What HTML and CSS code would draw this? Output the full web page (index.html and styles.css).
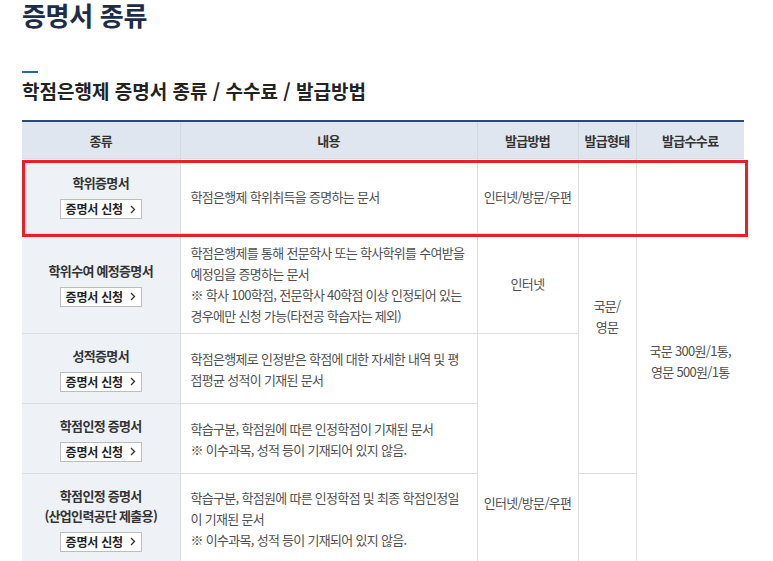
FILE: index.html
```html
<!DOCTYPE html>
<html lang="ko">
<head>
<meta charset="utf-8">
<title>증명서 종류</title>
<link rel="stylesheet" href="styles.css">
</head>
<body>
<div class="page">
  <h1 class="title">증명서 종류</h1>
  <div class="dash"></div>
  <h2 class="subtitle">학점은행제 증명서 종류 / 수수료 / 발급방법</h2>
  <div class="table-wrap">
    <table class="cert">
      <colgroup>
        <col class="c-kind"><col class="c-desc"><col class="c-method"><col class="c-form"><col class="c-fee">
      </colgroup>
      <thead>
        <tr><th>종류</th><th>내용</th><th>발급방법</th><th>발급형태</th><th>발급수수료</th></tr>
      </thead>
      <tbody>
        <tr class="r1">
          <td class="kind"><div class="kind-in"><span class="label">학위증명서</span><a class="btn">증명서 신청 <svg class="chev" viewBox="0 0 6 9" width="6" height="9"><path d="M1 1l3.5 3.5L1 8" fill="none" stroke="#333" stroke-width="1.3"/></svg></a></div></td>
          <td class="desc">학점은행제 학위취득을 증명하는 문서</td>
          <td class="center">인터넷/방문/우편</td>
          <td class="center form" rowspan="4">국문/<br>영문</td>
          <td class="center fee" rowspan="5">국문 300원/1통,<br>영문 500원/1통</td>
        </tr>
        <tr class="r2">
          <td class="kind"><div class="kind-in"><span class="label">학위수여 예정증명서</span><a class="btn">증명서 신청 <svg class="chev" viewBox="0 0 6 9" width="6" height="9"><path d="M1 1l3.5 3.5L1 8" fill="none" stroke="#333" stroke-width="1.3"/></svg></a></div></td>
          <td class="desc">학점은행제를 통해 전문학사 또는 학사학위를 수여받을<br>예정임을 증명하는 문서<br>※ 학사 100학점, 전문학사 40학점 이상 인정되어 있는<br>경우에만 신청 가능(타전공 학습자는 제외)</td>
          <td class="center">인터넷</td>
        </tr>
        <tr class="r3">
          <td class="kind"><div class="kind-in"><span class="label">성적증명서</span><a class="btn">증명서 신청 <svg class="chev" viewBox="0 0 6 9" width="6" height="9"><path d="M1 1l3.5 3.5L1 8" fill="none" stroke="#333" stroke-width="1.3"/></svg></a></div></td>
          <td class="desc">학점은행제로 인정받은 학점에 대한 자세한 내역 및 평<br>점평균 성적이 기재된 문서</td>
          <td class="center" rowspan="4">인터넷/방문/우편</td>
        </tr>
        <tr class="r4">
          <td class="kind"><div class="kind-in"><span class="label">학점인정 증명서</span><a class="btn">증명서 신청 <svg class="chev" viewBox="0 0 6 9" width="6" height="9"><path d="M1 1l3.5 3.5L1 8" fill="none" stroke="#333" stroke-width="1.3"/></svg></a></div></td>
          <td class="desc">학습구분, 학점원에 따른 인정학점이 기재된 문서<br>※ 이수과목, 성적 등이 기재되어 있지 않음.</td>
        </tr>
        <tr class="r5">
          <td class="kind"><div class="kind-in"><span class="label">학점인정 증명서<br>(산업인력공단 제출용)</span><a class="btn">증명서 신청 <svg class="chev" viewBox="0 0 6 9" width="6" height="9"><path d="M1 1l3.5 3.5L1 8" fill="none" stroke="#333" stroke-width="1.3"/></svg></a></div></td>
          <td class="desc">학습구분, 학점원에 따른 인정학점 및 최종 학점인정일<br>이 기재된 문서<br>※ 이수과목, 성적 등이 기재되어 있지 않음.</td>
          <td class="center" rowspan="2"></td>
        </tr>
        <tr class="r6">
          <td class="kind"><div class="kind-in"><span class="label">학점인정 증명서<br>(영문)</span><a class="btn">증명서 신청 <svg class="chev" viewBox="0 0 6 9" width="6" height="9"><path d="M1 1l3.5 3.5L1 8" fill="none" stroke="#333" stroke-width="1.3"/></svg></a></div></td>
          <td class="desc">학습구분, 학점원에 따른 인정학점이 기재된 영문 문서</td>
          <td class="center"></td>
        </tr>
      </tbody>
    </table>
    <div class="highlight"></div>
  </div>
</div>
</body>
</html>
```

FILE: styles.css
```css
html, body {
  margin: 0;
  padding: 0;
  background: #fff;
}
body {
  font-family: "Noto Sans CJK KR", "Noto Sans", sans-serif;
  color: #333;
}
.page {
  padding-left: 22px;
}
.title {
  margin: 0;
  font-size: 26px;
  line-height: 30px;
  font-weight: 700;
  letter-spacing: -0.3px;
  color: #1c2d4a;
}
.dash {
  width: 16px;
  height: 2px;
  background: #1f6aa3;
  margin-top: 41px;
}
.subtitle {
  margin: 6px 0 0;
  font-size: 19px;
  line-height: 24px;
  font-weight: 700;
  letter-spacing: 0;
  color: #222;
}
.table-wrap {
  position: relative;
  margin-top: 17px;
  width: 722px;
}
.cert {
  border-collapse: collapse;
  table-layout: fixed;
  width: 722px;
  font-size: 13px;
  letter-spacing: -0.7px;
}
.c-kind { width: 158px; }
.c-desc { width: 297px; }
.c-method { width: 101px; }
.c-form { width: 58px; }
.c-fee { width: 108px; }
.cert th {
  height: 36px;
  padding: 0;
  background: #dfe6ef;
  border-top: 2px solid #2c4a70;
  border-left: 1px solid #d3d9e1;
  font-weight: 700;
  color: #333;
  text-align: center;
}
.cert th:first-child { border-left: none; }
.cert td {
  border: 1px solid #dedede;
  padding: 0;
  color: #4f4f4f;
  line-height: 21px;
  vertical-align: middle;
}
.cert td:first-child { border-left: none; }
.cert td.fee { border-right: none; }
.r1 { height: 75px; }
.r2 { height: 100px; }
.r3 { height: 70px; }
.r4 { height: 70px; }
.r5 { height: 90px; }
.r6 { height: 108px; }
.kind {
  background: #eef2f7;
  text-align: center;
}
.kind-in {
  display: flex;
  flex-direction: column;
  align-items: center;
  gap: 6px;
}
.label {
  font-weight: 700;
  color: #333;
  line-height: 20px;
}
.btn {
  display: flex;
  align-items: center;
  justify-content: center;
  gap: 7px;
  width: 82px;
  height: 20px;
  box-sizing: border-box;
  background: #fff;
  border: 1px solid #bdbdbd;
  font-size: 12px;
  font-weight: 700;
  color: #222;
  letter-spacing: -0.2px;
  line-height: 18px;
}
.chev { display: block; }
.desc {
  padding: 0 10px !important;
  white-space: nowrap;
  text-align: left;
}
.center {
  text-align: center;
}
.highlight {
  position: absolute;
  left: 0;
  top: 40px;
  width: 726px;
  height: 77px;
  box-sizing: border-box;
  border: 3px solid #e8202a;
  pointer-events: none;
}
```
